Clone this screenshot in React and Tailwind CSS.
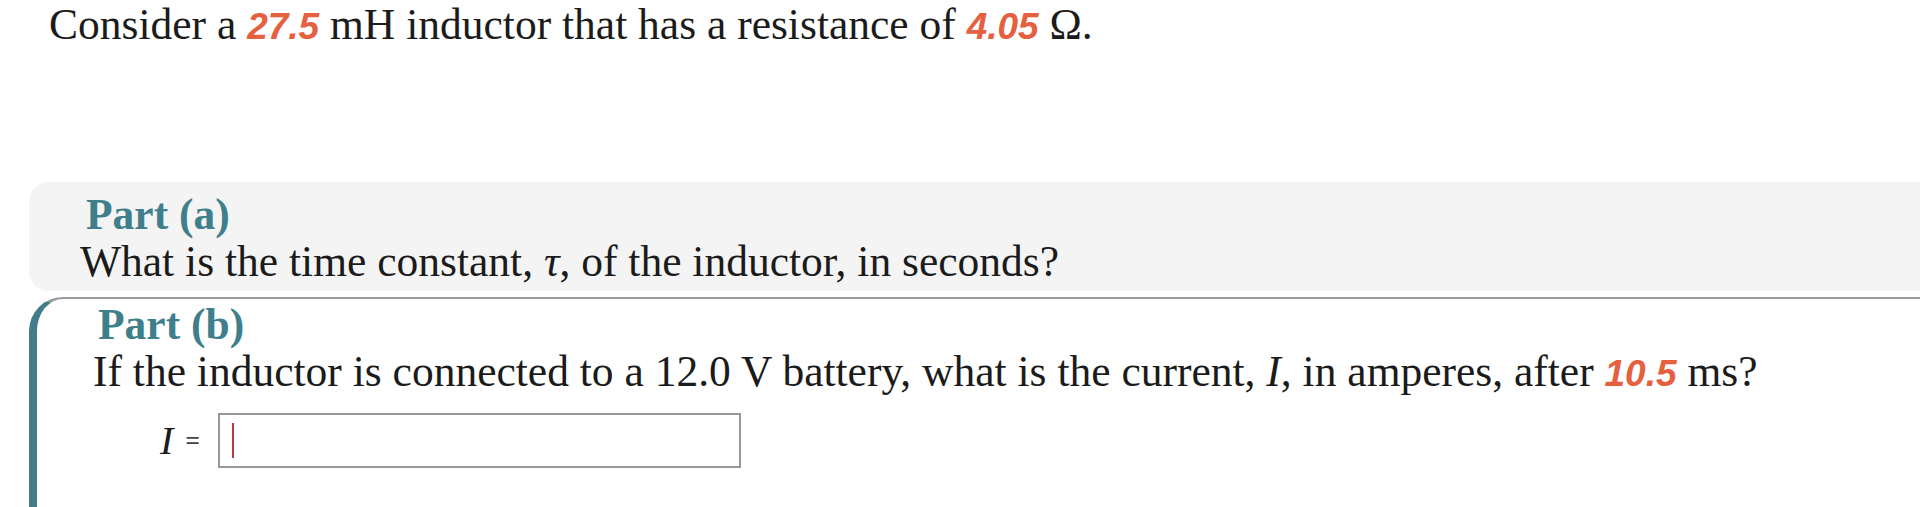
function Num({ children }) {
  return (
    <span className="font-['Liberation_Sans',sans-serif] text-[37px] font-bold italic text-[#e5603f]">
      {children}
    </span>
  );
}

function App() {
  return (
    <div className="h-[507px] w-full overflow-hidden bg-white font-['Liberation_Serif',serif] text-[43.5px] leading-[47px] text-[#1b1b1b]">
      <p className="pl-[49px] pt-[1px]">
        Consider a <Num>27.5</Num> mH inductor that has a resistance of <Num>4.05</Num> Ω.
      </p>

      <section className="ml-[29px] mt-[132px] rounded-l-[20px] bg-[#f4f4f4] pb-[6px] pl-[51px] pt-[9px]">
        <h2 className="pl-[6px] font-bold text-[#3f7f8c]">Part (a)</h2>
        <p>
          What is the time constant, <i>τ</i>, of the inductor, in seconds?
        </p>
      </section>

      <section className="ml-[29px] mt-[6px] h-[240px] rounded-tl-[34px] border-l-[8px] border-t-2 border-l-[#437d8b] border-t-[#9a9a9a] pl-[56px] pt-[2px]">
        <h2 className="pl-[5px] font-bold text-[#3f7f8c]">Part (b)</h2>
        <p>
          If the inductor is connected to a 12.0 V battery, what is the current, <i>I</i>, in amperes, after{' '}
          <Num>10.5</Num> ms?
        </p>
        <div className="ml-[67px] mt-[16px] flex items-center">
          <span className="text-[40px] italic">I</span>
          <span className="ml-[12px] font-['Noto_Sans',sans-serif] text-[26px] text-[#444]">=</span>
          <div className="ml-[18px] flex h-[55px] w-[523px] items-center border-2 border-[#999] bg-white pl-[12px]">
            <span className="h-[35px] w-[2px] bg-[#c0393b]" />
          </div>
        </div>
      </section>
    </div>
  );
}

export default App;
